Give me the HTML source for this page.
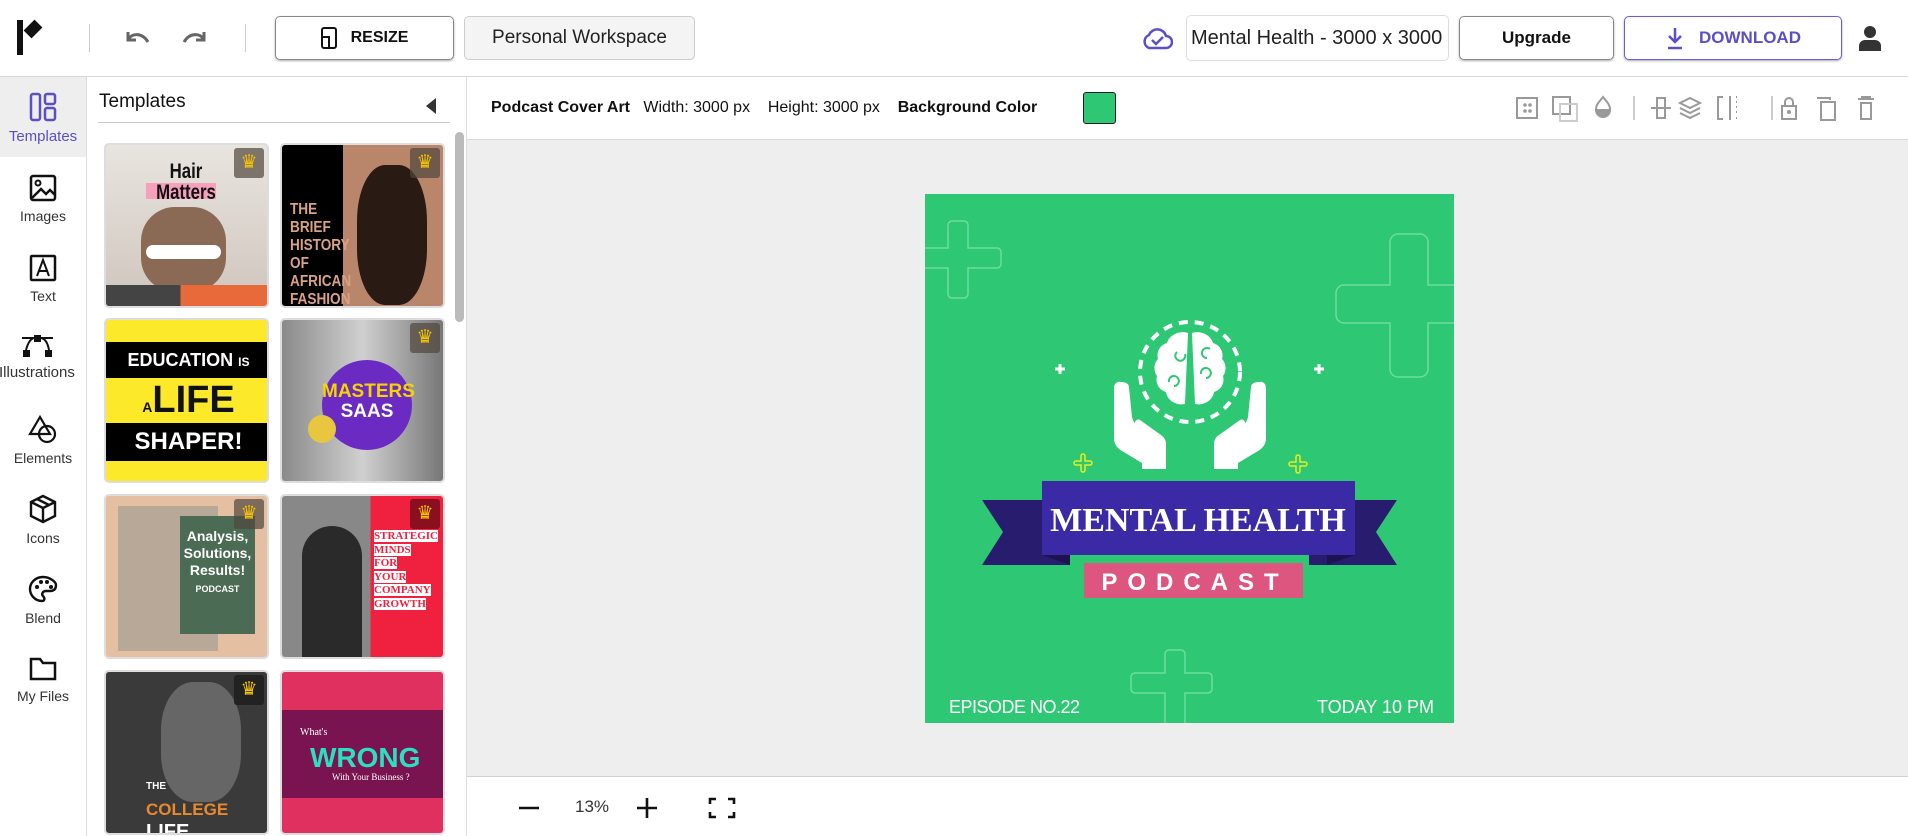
<!DOCTYPE html>
<html><head><meta charset="utf-8"><style>
*{box-sizing:border-box;margin:0;padding:0}
body{width:1908px;height:836px;overflow:hidden;background:#fff;font-family:"Liberation Sans",sans-serif;position:relative;color:#111}
.abs{position:absolute}
.btn{position:absolute;border:1px solid #bbb;border-radius:5px;display:flex;align-items:center;justify-content:center;font-size:17px}
.rail{position:absolute;left:0;width:86px;text-align:center;font-size:14px;color:#333}
.rail svg{display:block;margin:0 auto 6px}
.th{position:absolute;width:165px;height:165px;border-radius:5px;overflow:hidden;border:2px solid #ddd}
.crown{position:absolute;right:3px;top:3px;width:30px;height:30px;background:rgba(80,70,60,.7);border-radius:3px;color:#f5c400;font-size:19px;text-align:center;line-height:30px}
</style></head><body>
<!-- top bar -->
<div class="abs" style="left:0;top:76px;width:1908px;height:1px;background:#d8d8d8"></div>
<div class="abs" style="left:17px;top:20px;width:6px;height:35px;background:#111"></div>
<div class="abs" style="left:26px;top:22px;width:14px;height:14px;background:#111;transform:rotate(45deg) scale(.8,1.1)"></div>
<div class="abs" style="left:89px;top:24px;width:1px;height:28px;background:#ccc"></div>
<svg class="abs" style="left:122px;top:28px" width="30" height="20" viewBox="0 0 30 20"><path d="M6 4v8h8M6 12C9 5 20 4 26 14" fill="none" stroke="#666" stroke-width="3"/></svg>
<svg class="abs" style="left:180px;top:28px" width="30" height="20" viewBox="0 0 30 20"><path d="M24 4v8h-8M24 12C21 5 10 4 4 14" fill="none" stroke="#666" stroke-width="3"/></svg>
<div class="abs" style="left:245px;top:24px;width:1px;height:28px;background:#ccc"></div>
<div class="btn" style="left:275px;top:16px;width:179px;height:44px;border-color:#888;font-weight:bold;font-size:16px;box-shadow:0 1px 2px #aaa"><svg width="16" height="22" style="margin-right:14px" viewBox="0 0 16 22"><rect x="1" y="1" width="14" height="20" rx="2" fill="none" stroke="#111" stroke-width="2"/><path d="M1 10h7v11" fill="none" stroke="#111" stroke-width="2"/></svg>RESIZE</div>
<div class="btn" style="left:464px;top:16px;width:231px;height:44px;background:#f4f4f4;border-color:#ccc;font-size:19px;color:#222">Personal Workspace</div>
<svg class="abs" style="left:1141px;top:26px" width="32" height="26" viewBox="0 0 32 26"><path d="M8 22h17a6 6 0 0 0 0-12 9 9 0 0 0-17-1 7 7 0 0 0 0 13z" fill="none" stroke="#5a4fc4" stroke-width="2.5"/><path d="M11 14l4 4 7-7" fill="none" stroke="#5a4fc4" stroke-width="2.5"/></svg>
<div class="btn" style="left:1186px;top:15px;width:263px;height:46px;border-color:#ddd;justify-content:flex-start;padding-left:4px;font-size:20px;overflow:hidden;white-space:nowrap;color:#222">Mental Health - 3000 x 3000</div>
<div class="btn" style="left:1459px;top:16px;width:155px;height:44px;border-color:#888;font-weight:bold;font-size:17px;box-shadow:0 1px 2px #aaa">Upgrade</div>
<div class="btn" style="left:1624px;top:16px;width:218px;height:44px;border-color:#6a5fcf;color:#5a4fc4;font-weight:bold;font-size:17px;box-shadow:0 1px 2px #aaa"><svg width="20" height="24" style="margin-right:14px" viewBox="0 0 20 24"><path d="M10 2v14M4 10l6 6 6-6M3 22h14" fill="none" stroke="#5a4fc4" stroke-width="2.5"/></svg>DOWNLOAD</div>
<svg class="abs" style="left:1858px;top:24px" width="24" height="28" viewBox="0 0 24 28"><circle cx="12" cy="8" r="6" fill="#333"/><path d="M1 27v-5a6 6 0 0 1 6-6h10a6 6 0 0 1 6 6v5z" fill="#333"/></svg>

<!-- left rail -->
<div class="abs" style="left:0;top:77px;width:86px;height:80px;background:#eee"></div>
<div class="abs" style="left:86px;top:77px;width:1px;height:759px;background:#ddd"></div>
<div class="rail" style="top:92px;color:#5a4fc4;font-size:15px"><svg width="28" height="30" viewBox="0 0 28 30"><rect x="2" y="2" width="9" height="26" rx="2" fill="none" stroke="#5a4fc4" stroke-width="2.5"/><rect x="16" y="2" width="10" height="10" rx="2" fill="none" stroke="#5a4fc4" stroke-width="2.5"/><rect x="16" y="16" width="10" height="12" rx="2" fill="none" stroke="#5a4fc4" stroke-width="2.5"/></svg>Templates</div>
<div class="rail" style="top:174px"><svg width="28" height="28" viewBox="0 0 28 28"><rect x="2" y="2" width="24" height="24" rx="2" fill="none" stroke="#111" stroke-width="2.5"/><circle cx="9" cy="9" r="2.5" fill="none" stroke="#111" stroke-width="2"/><path d="M3 24l9-9 5 5 4-4 5 5" fill="none" stroke="#111" stroke-width="2.5"/></svg>Images</div>
<div class="rail" style="top:254px"><svg width="28" height="28" viewBox="0 0 28 28"><rect x="2" y="2" width="24" height="24" rx="1" fill="none" stroke="#111" stroke-width="2.5"/><path d="M8 22l6-16 6 16M10 17h8" fill="none" stroke="#111" stroke-width="2"/></svg>Text</div>
<div class="rail" style="top:334px;font-size:15px;text-align:left;left:-1px;white-space:nowrap"><svg width="34" height="24" viewBox="0 0 34 24" style="margin-left:22px"><rect x="13" y="1" width="7" height="7" fill="#111"/><rect x="2" y="16" width="7" height="7" fill="#111"/><rect x="24" y="16" width="7" height="7" fill="#111"/><path d="M5 16Q8 5 13 4M20 4Q26 5 28 16M1 4h12M20 4h12" fill="none" stroke="#111" stroke-width="2"/></svg>Illustrations</div>
<div class="rail" style="top:414px"><svg width="30" height="30" viewBox="0 0 30 30"><path d="M12 3L2 20h20z" fill="none" stroke="#111" stroke-width="2.2"/><circle cx="19" cy="20" r="8" fill="none" stroke="#111" stroke-width="2.2"/></svg>Elements</div>
<div class="rail" style="top:494px"><svg width="30" height="30" viewBox="0 0 30 30"><path d="M15 2l12 6v14l-12 6-12-6V8zM3 8l12 6 12-6M15 14v14M9 5l12 6" fill="none" stroke="#111" stroke-width="2.4"/></svg>Icons</div>
<div class="rail" style="top:574px"><svg width="30" height="30" viewBox="0 0 30 30"><path d="M15 3C7 3 2 9 2 15s5 12 12 12c3 0 3-3 1-5s0-5 3-5h4c4 0 6-2 6-6C28 8 22 3 15 3z" fill="none" stroke="#111" stroke-width="2.4"/><circle cx="9" cy="13" r="2" fill="#111"/><circle cx="13" cy="8" r="2" fill="#111"/><circle cx="19" cy="8" r="2" fill="#111"/><circle cx="23" cy="13" r="2" fill="#111"/></svg>Blend</div>
<div class="rail" style="top:656px"><svg width="28" height="26" viewBox="0 0 28 26"><path d="M2 3h9l3 4h12v16H2z" fill="none" stroke="#111" stroke-width="2.5"/></svg>My Files</div>

<!-- templates panel -->
<div class="abs" style="left:99px;top:91px;font-size:19px;color:#111">Templates</div>
<div class="abs" style="left:426px;top:98px;width:0;height:0;border-top:8px solid transparent;border-bottom:8px solid transparent;border-right:10px solid #333"></div>
<div class="abs" style="left:98px;top:122px;width:352px;height:1px;background:#ccc"></div>
<div class="abs" style="left:455px;top:132px;width:9px;height:190px;background:#bbb;border-radius:5px"></div>
<div class="abs" style="left:466px;top:77px;width:1px;height:759px;background:#ddd"></div>

<div class="th" style="left:104px;top:143px;background:linear-gradient(#e8e4df,#cfc6bd)"><div class="abs" style="left:40px;top:38px;width:70px;height:16px;background:#f7a0bd"></div><div class="abs" style="left:30px;top:16px;width:100px;text-align:center;font:bold 21px/21px 'Liberation Sans';color:#111;transform:scaleX(.8)">Hair<br>Matters</div><div class="abs" style="left:35px;top:62px;width:85px;height:85px;border-radius:40%;background:#8a6a55"></div><div class="abs" style="left:40px;top:100px;width:75px;height:14px;border-radius:7px;background:#fff"></div><div class="abs" style="left:0;top:140px;width:165px;height:25px;background:linear-gradient(90deg,#444 45%,#e86a3a 45%)"></div><div class="crown">♛</div></div>
<div class="th" style="left:280px;top:143px;background:linear-gradient(90deg,#000 38%,#b9866c 38%)"><div class="abs" style="left:75px;top:20px;width:70px;height:140px;border-radius:40%;background:#2a1a14"></div><div class="abs" style="left:8px;top:56px;font:bold 16px/18px 'Liberation Sans';color:#d9a283;transform:scaleX(.85);transform-origin:left">THE<br>BRIEF<br>HISTORY<br>OF<br>AFRICAN<br>FASHION</div><div class="crown">♛</div></div>
<div class="th" style="left:104px;top:318px;background:#fbe92a"><div class="abs" style="left:0;top:22px;width:165px;height:36px;background:#000;color:#fff;font:bold 18px/36px 'Liberation Sans';text-align:center">EDUCATION <span style="font-size:12px">IS</span></div><div class="abs" style="left:0;top:60px;width:165px;text-align:center;font:bold 38px/40px 'Liberation Sans'"><span style="font-size:14px">A</span>LIFE</div><div class="abs" style="left:0;top:103px;width:165px;height:38px;background:#000;color:#fff;font:bold 24px/38px 'Liberation Sans';text-align:center">SHAPER!</div></div>
<div class="th" style="left:280px;top:318px;background:linear-gradient(90deg,#8a8a8a,#d0d0d0,#777)"><div class="abs" style="left:40px;top:40px;width:90px;height:90px;border-radius:50%;background:#6b2ac2;color:#f5d400;font:bold 19px/20px 'Liberation Sans';text-align:center;padding-top:22px">MASTERS<br><span style="color:#fff">SAAS</span></div><div class="abs" style="left:26px;top:95px;width:28px;height:28px;border-radius:50%;background:#e8c640"></div><div class="crown">♛</div></div>
<div class="th" style="left:104px;top:494px;background:#e4bfa1"><div class="abs" style="left:12px;top:10px;width:100px;height:145px;background:#b8a898"></div><div class="abs" style="left:74px;top:20px;width:75px;height:118px;background:#4c6b55;color:#fff;font:bold 14px/17px 'Liberation Sans';text-align:center;padding-top:12px">Analysis,<br>Solutions,<br>Results!<br><span style="font-size:9px">PODCAST</span></div><div class="crown">♛</div></div>
<div class="th" style="left:280px;top:494px;background:linear-gradient(90deg,#888 55%,#f0203f 55%)"><div class="abs" style="left:20px;top:30px;width:60px;height:135px;border-radius:30px 30px 0 0;background:#2a2a2a"></div><div class="abs" style="left:92px;top:34px;font:bold 11px/13.5px 'Liberation Serif';color:#f0203f"><span style="background:#fff">STRATEGIC</span><br><span style="background:#fff">MINDS</span><br><span style="background:#fff">FOR</span><br><span style="background:#fff">YOUR</span><br><span style="background:#fff">COMPANY</span><br><span style="background:#fff">GROWTH</span></div><div class="crown" style="background:#8a1020">♛</div></div>
<div class="th" style="left:104px;top:670px;background:#3a3a3a"><div class="abs" style="left:55px;top:10px;width:80px;height:120px;border-radius:40%;background:#666"></div><div class="abs" style="left:40px;top:100px;font:bold 20px/22px 'Liberation Sans';color:#fff"><span style="font-size:10px">THE</span><br><span style="color:#e8892e;font-size:17px">COLLEGE</span><br>LIFE</div><div class="crown" style="background:#222">♛</div></div>
<div class="th" style="left:280px;top:670px;background:#e0305f"><div class="abs" style="left:0;top:38px;width:165px;height:88px;background:#7a1450"></div><div class="abs" style="left:28px;top:70px;font:bold 28px 'Liberation Sans';color:#2be0c0">WRONG</div><div class="abs" style="left:18px;top:55px;font:10px 'Liberation Serif';color:#fff">What's</div><div class="abs" style="left:50px;top:100px;font:9px 'Liberation Serif';color:#fff">With Your Business ?</div></div>

<!-- canvas toolbar -->
<div class="abs" style="left:491px;top:99px;font-size:16px;white-space:nowrap;color:#111"><b>Podcast Cover Art</b>&nbsp;&nbsp; Width: 3000 px&nbsp;&nbsp;&nbsp; Height: 3000 px&nbsp;&nbsp;&nbsp; <b>Background Color</b></div>
<div class="abs" style="left:1083px;top:92px;width:33px;height:32px;background:#2ec774;border:1px solid #222;border-radius:3px"></div>
<svg class="abs" style="left:1510px;top:92px" width="390" height="32" viewBox="0 0 390 32" fill="none" stroke="#999" stroke-width="2">
<rect x="7" y="6" width="20" height="20"/><circle cx="15" cy="13" r="0.8" fill="#999"/><circle cx="20" cy="13" r="0.8" fill="#999"/><circle cx="15" cy="19" r="0.8" fill="#999"/><circle cx="20" cy="19" r="0.8" fill="#999"/>
<rect x="43" y="5" width="17" height="17"/><rect x="50" y="12" width="17" height="17" stroke="#ccc"/>
<path d="M93 5c-4 5-7 8-7 12a7 7 0 0 0 14 0c0-4-3-7-7-12z"/><path d="M86 18a7 7 0 0 0 14 0z" fill="#999"/>
<path d="M124 4v24" stroke="#ccc"/>
<path d="M141 16h20M147 6h8v20h-8z"/>
<path d="M180 6l10 5-10 5-10-5zM170 16l10 5 10-5M170 21l10 5 10-5"/>
<path d="M213 5h-5v22h5M220 4v24M226 5h1M226 10h1M226 15h1M226 20h1M226 26h1"/>
<path d="M262 4v24" stroke="#ccc"/>
<rect x="272" y="14" width="14" height="13"/><path d="M275 14v-4a4 4 0 0 1 8 0v4"/><circle cx="279" cy="20" r="1" fill="#999"/>
<path d="M307 6h13v2M311 10h14v18h-14z"/>
<path d="M348 7h16M352 7v-2h8v2M351 11h10v16h-10z"/>
</svg>

<!-- workspace -->
<div class="abs" style="left:467px;top:139px;width:1441px;height:638px;background:#eee;border-top:1px solid #d8d8d8;border-bottom:1px solid #d0d0d0"></div>

<svg class="abs" style="left:925px;top:194px" width="529" height="529" viewBox="0 0 529 529">
<rect width="529" height="529" fill="#2ec774"/>
<g fill="none" stroke="#6fdc9e" stroke-width="1.5">
<path d="M0 54h23V31a4 4 0 0 1 4-4h12a4 4 0 0 1 4 4v23h29a4 4 0 0 1 4 4v12a4 4 0 0 1-4 4H43v26a4 4 0 0 1-4 4H27a4 4 0 0 1-4-4V74H0"/>
<path d="M529 91h-26V48a8 8 0 0 0-8-8h-22a8 8 0 0 0-8 8v43h-46a8 8 0 0 0-8 8v22a8 8 0 0 0 8 8h46v46a8 8 0 0 0 8 8h22a8 8 0 0 0 8-8v-46h26"/>
<path d="M240 529v-30h-30a4 4 0 0 1-4-4v-12a4 4 0 0 1 4-4h30v-19a4 4 0 0 1 4-4h12a4 4 0 0 1 4 4v19h23a4 4 0 0 1 4 4v12a4 4 0 0 1-4 4h-23v30"/>
</g>
<circle cx="265" cy="178" r="50" fill="none" stroke="#fff" stroke-width="4" stroke-dasharray="9 7"/>
<path d="M263 139c-8-3-19 2-21 10-7 2-11 9-9 16-4 4-5 12-1 17-2 7 2 14 9 16 1 8 10 14 19 12z" fill="#fff"/>
<path d="M267 139c8-3 19 2 21 10 7 2 11 9 9 16 4 4 5 12 1 17 2 7-2 14-9 16-1 8-10 14-19 12z" fill="#fff"/>
<path d="M252 158a5 5 0 1 0 8 2M285 155a5 5 0 1 0-3 9M276 180a5 5 0 1 1 5 4M244 188a5 5 0 1 1 5 4" fill="none" stroke="#2ec774" stroke-width="2"/>
<path d="M196 188c-4-1-7 2-7 6v50c0 6 3 10 8 13l20 12v6h24v-25c0-4-2-7-5-9l-21-15c-3-2-7 2-4 6l13 13-11-12c-3-3-5-6-6-10l-3-30c0-3-3-5-8-5z" fill="#fff"/>
<path d="M334 188c4-1 7 2 7 6v50c0 6-3 10-8 13l-20 12v6h-24v-25c0-4 2-7 5-9l21-15c3-2 7 2 4 6l-13 13 11-12c3-3 5-6 6-10l3-30c0-3 3-5 8-5z" fill="#fff"/>
<path d="M135 170v10M130 175h10M394 170v10M389 175h10" stroke="#fff" stroke-width="3"/>
<path d="M156 267v-5a2 2 0 0 1 4 0v5h5a2 2 0 0 1 0 4h-5v5a2 2 0 0 1-4 0v-5h-5a2 2 0 0 1 0-4z" fill="none" stroke="#e6ef20" stroke-width="1.5"/>
<path d="M371 268v-5a2 2 0 0 1 4 0v5h5a2 2 0 0 1 0 4h-5v5a2 2 0 0 1-4 0v-5h-5a2 2 0 0 1 0-4z" fill="none" stroke="#e6ef20" stroke-width="1.5"/>
<path d="M57 306h88v65H57l21-33z" fill="#281c6f"/>
<path d="M472 306h-88v65h88l-21-33z" fill="#281c6f"/>
<path d="M117 361h28v10z" fill="#1c1350"/><path d="M430 361h-28v10z" fill="#1c1350"/>
<rect x="117" y="287" width="313" height="74" fill="#3b2aa5"/>
<text x="273" y="337" text-anchor="middle" fill="#fff" font-family="Liberation Serif,serif" font-size="34" font-weight="bold">MENTAL HEALTH</text>
<rect x="159" y="369" width="219" height="35" fill="#dc5680"/>
<text x="270" y="396" text-anchor="middle" fill="#fff" font-family="Liberation Sans,sans-serif" font-size="24" font-weight="bold" letter-spacing="10">PODCAST</text>
<text x="24" y="519" fill="#fff" font-family="Liberation Sans,sans-serif" font-size="18" letter-spacing="-0.5">EPISODE NO.22</text>
<text x="509" y="519" text-anchor="end" fill="#fff" font-family="Liberation Sans,sans-serif" font-size="18">TODAY 10  PM</text>
</svg>

<!-- bottom bar -->
<svg class="abs" style="left:515px;top:796px" width="240" height="24" viewBox="0 0 240 24"><path d="M4 12h20M132 2v20M122 12h20" stroke="#111" stroke-width="2.6"/><path d="M195 8V3h6M213 3h6v5M219 16v5h-6M201 21h-6v-5" fill="none" stroke="#111" stroke-width="2.6"/></svg>
<div class="abs" style="left:575px;top:797px;font-size:17px;color:#333">13%</div>
</body></html>
